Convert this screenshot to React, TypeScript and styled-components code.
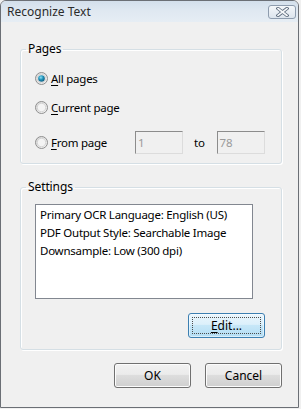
import * as React from 'react';
import styled, { createGlobalStyle } from 'styled-components';

const GlobalStyle = createGlobalStyle`
  html, body {
    margin: 0;
    padding: 0;
    background: #f0f0f0;
  }
  body {
    font-family: 'Noto Sans', 'Open Sans', sans-serif;
    font-size: 11.5px;
    letter-spacing: -0.25px;
    color: #000;
  }
`;

const Window = styled.div`
  width: 299px;
  height: 408px;
  box-sizing: border-box;
  border: 1px solid #6b6f75;
  border-radius: 6px 6px 0 0;
  background: #f0f0f0;
  display: flex;
  flex-direction: column;
  overflow: hidden;
`;

const TitleBar = styled.div`
  height: 21px;
  flex: none;
  display: flex;
  align-items: center;
  justify-content: space-between;
  padding: 0 2px 0 6px;
  background: linear-gradient(#d3dfeb 0%, #dfe8f1 45%, #e6edf4 100%);
  color: #2b2b2b;
  font-size: 12px;
  letter-spacing: 0;
`;

const CloseButton = styled.div`
  width: 26px;
  height: 12px;
  margin-top: 1px;
  border: 1px solid #8e9cae;
  border-radius: 3px;
  background: linear-gradient(#f4f7fa, #dce4ed);
  display: flex;
  align-items: center;
  justify-content: center;
`;

const Body = styled.div`
  flex: 1;
  display: flex;
  flex-direction: column;
  padding: 19px 16px 0 19px;
`;

const Group = styled.fieldset<{ $height: number; $top?: number }>`
  margin: ${(p) => p.$top ?? 0}px 0 0 0;
  height: ${(p) => p.$height}px;
  box-sizing: border-box;
  border: 1px solid #d5dfe5;
  border-radius: 3px;
  box-shadow: inset 1px 1px 0 #fff, 1px 1px 0 #fff;
  padding: 0;
  display: flex;
  flex-direction: column;
`;

const Legend = styled.legend`
  margin-left: 5px;
  padding: 0 2px;
  line-height: 16px;
  font-size: 12px;
  letter-spacing: -0.1px;
`;

const RadioRow = styled.label<{ $gap: number }>`
  display: flex;
  align-items: center;
  height: 23px;
  margin-top: ${(p) => p.$gap}px;
  padding-left: 14px;
`;

const RadioText = styled.span`
  margin-left: 3px;
  width: 84px;
`;

const Key = styled.span`
  text-decoration: underline;
  text-underline-offset: 2px;
`;

const NumberBox = styled.div`
  width: 44px;
  height: 21px;
  border: 1px solid;
  border-color: #8c8c8c #dcdcdc #dcdcdc #8c8c8c;
  background: #f0f0f0;
  color: #9a9a9a;
  line-height: 21px;
  padding-left: 2px;
  box-sizing: content-box;
`;

const ToText = styled.span`
  margin: 0 12px 0 11px;
`;

const ListBox = styled.div`
  margin: 9px 0 0 14px;
  width: 218px;
  height: 95px;
  box-sizing: border-box;
  border: 1px solid #828790;
  background: #fff;
  padding: 1px 0 0 4px;
  line-height: 18px;
`;

const Button = styled.div<{ $default?: boolean }>`
  width: 77px;
  height: 25px;
  box-sizing: border-box;
  border: 1px solid ${(p) => (p.$default ? '#3c7fb1' : '#707070')};
  border-radius: 3px;
  background: ${(p) =>
    p.$default
      ? 'linear-gradient(#eaf6fd 0%, #dcf0fb 45%, #c6e7f8 50%, #b3ddf4 100%)'
      : 'linear-gradient(#f2f2f2 0%, #ebebeb 45%, #dddddd 50%, #cfcfcf 100%)'};
  box-shadow: inset 0 0 0 1px ${(p) => (p.$default ? 'rgba(255,255,255,0.5)' : '#fcfcfc')};
  display: flex;
  align-items: center;
  justify-content: center;
  font-size: 12px;
  letter-spacing: 0;
  position: relative;
`;

const FocusRing = styled.span`
  position: absolute;
  inset: 3px;
  border: 1px dotted #4d4d4d;
`;

const EditRow = styled.div`
  display: flex;
  justify-content: flex-end;
  margin: 14px 16px 0 0;
`;

const Footer = styled.div`
  display: flex;
  justify-content: flex-end;
  gap: 14px;
  margin-top: 13px;
`;

const Radio = ({ checked }: { checked?: boolean }) => (
  <svg width="13" height="13" viewBox="0 0 13 13">
    <defs>
      <linearGradient id="rbg" x1="0" y1="0" x2="1" y2="1">
        <stop offset="0" stopColor="#d6d6d6" />
        <stop offset="1" stopColor="#f6f6f6" />
      </linearGradient>
      <radialGradient id="rdot" cx="0.4" cy="0.35" r="0.7">
        <stop offset="0" stopColor="#8ee0f5" />
        <stop offset="0.5" stopColor="#1c8fb7" />
        <stop offset="1" stopColor="#14597a" />
      </radialGradient>
    </defs>
    <circle cx="6.5" cy="6.5" r="6" fill="url(#rbg)" stroke="#8f8f8f" />
    <circle cx="6.5" cy="6.5" r="4.2" fill="#f4f4f4" stroke="#c4c4c4" strokeWidth="0.6" />
    {checked && <circle cx="6.5" cy="6.5" r="3.3" fill="url(#rdot)" />}
  </svg>
);

const CloseGlyph = () => (
  <svg width="13" height="10" viewBox="0 0 13 10">
    <path
      d="M2 1.5 L11 8.5 M11 1.5 L2 8.5"
      stroke="#5d6b7d"
      strokeWidth="3.4"
      strokeLinecap="square"
    />
    <path
      d="M2 1.5 L11 8.5 M11 1.5 L2 8.5"
      stroke="#f7f9fb"
      strokeWidth="1.6"
      strokeLinecap="square"
    />
  </svg>
);

export default function App() {
  return (
    <>
      <GlobalStyle />
      <Window>
        <TitleBar>
          <span>Recognize Text</span>
          <CloseButton>
            <CloseGlyph />
          </CloseButton>
        </TitleBar>
        <Body>
          <Group $height={123}>
            <Legend>Pages</Legend>
            <RadioRow $gap={10}>
              <Radio checked />
              <RadioText>
                <Key>A</Key>ll pages
              </RadioText>
            </RadioRow>
            <RadioRow $gap={6}>
              <Radio />
              <RadioText>
                <Key>C</Key>urrent page
              </RadioText>
            </RadioRow>
            <RadioRow $gap={12}>
              <Radio />
              <RadioText>
                <Key>F</Key>rom page
              </RadioText>
              <NumberBox>1</NumberBox>
              <ToText>to</ToText>
              <NumberBox>78</NumberBox>
            </RadioRow>
          </Group>
          <Group $height={171} $top={15}>
            <Legend>Settings</Legend>
            <ListBox>
              <div>Primary OCR Language: English (US)</div>
              <div>PDF Output Style: Searchable Image</div>
              <div>Downsample: Low (300 dpi)</div>
            </ListBox>
            <EditRow>
              <Button $default>
                <FocusRing />
                <span>
                  <Key>E</Key>dit...
                </span>
              </Button>
            </EditRow>
          </Group>
          <Footer>
            <Button>OK</Button>
            <Button>Cancel</Button>
          </Footer>
        </Body>
      </Window>
    </>
  );
}
